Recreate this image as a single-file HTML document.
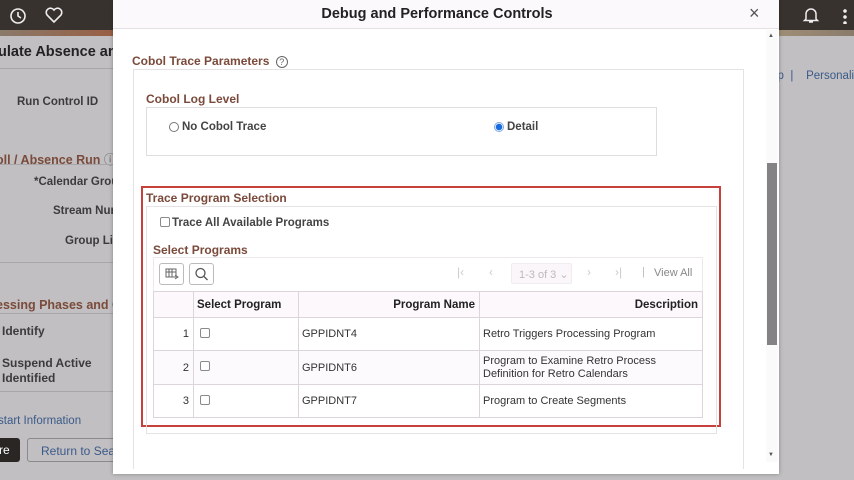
<!DOCTYPE html>
<html><head><style>
*{box-sizing:border-box;margin:0;padding:0}
body{width:854px;height:480px;overflow:hidden;position:relative;background:#c1bfc1;font-family:"Liberation Sans",sans-serif;}
.abs{position:absolute}
.top{left:0;top:0;width:854px;height:30px;background:#38322f}
.band{left:0;top:30px;width:854px;height:6px;background:linear-gradient(90deg,#8a7a6a,#a05030 20%,#c89040 40%,#8a9aa0 60%,#b8a888 80%,#8a7a6a)}
.lbl{font-size:12px;font-weight:bold;color:#3c3a3c;white-space:nowrap}
.brn{color:#7a4a3a;font-weight:bold;white-space:nowrap}
.modal{left:113px;top:0;width:666px;height:474px;background:#fff;box-shadow:0 0 4px rgba(0,0,0,.3)}
.hdr{left:0;top:0;width:666px;height:29px;background:#fcf9fc;border-bottom:1px solid #e4e0e4}
table{border-collapse:collapse;font-size:11px;color:#333}
td,th{border:1px solid #dcd6dc;}
th{height:25px;background:#fcf8fc;font-size:11.5px;color:#222}
.cb{display:inline-block;width:10px;height:10px;border:1px solid #8a8a8a;border-radius:2px;background:#fff}
</style></head><body>
<div class="abs top"></div>
<div class="abs band"></div>
<svg class="abs" style="left:8px;top:6px" width="20" height="20" viewBox="0 0 20 20"><circle cx="10" cy="10" r="7" fill="none" stroke="#eee" stroke-width="1.6"/><path d="M10 6v4l3 2" fill="none" stroke="#eee" stroke-width="1.6"/></svg>
<svg class="abs" style="left:44px;top:6px" width="20" height="18" viewBox="0 0 20 18"><path d="M10 16L3 9a4 4 0 0 1 7-5 4 4 0 0 1 7 5z" fill="none" stroke="#eee" stroke-width="1.6"/></svg>
<svg class="abs" style="left:802px;top:5px" width="18" height="20" viewBox="0 0 18 20"><path d="M4 14V9a5 5 0 0 1 10 0v5l1.5 1.5h-13z M7 17h4" fill="none" stroke="#eee" stroke-width="1.5"/></svg>
<div class="abs" style="left:843px;top:8px;width:4px;height:16px;background:radial-gradient(circle,#eee 1.6px,transparent 2px) 0 0/4px 6px"></div>
<div class="abs" style="left:-2px;top:44px;font-size:14.5px;font-weight:bold;color:#222;white-space:nowrap">ulate Absence an</div>
<div class="abs" style="left:0;top:68px;width:113px;height:1px;background:#a8a6a8"></div>
<div class="abs lbl" style="left:17px;top:96px;font-size:11.5px">Run Control ID</div>
<div class="abs brn" style="left:-4px;top:149px;font-size:12.5px">oll / Absence Run <span style="font-weight:normal;color:#666">ⓘ</span></div>
<div class="abs" style="left:0;top:164px;width:113px;height:1px;background:#a8a6a8"></div>
<div class="abs lbl" style="left:34px;top:176px;font-size:11.5px">*Calendar Grou</div>
<div class="abs lbl" style="left:53px;top:205px;font-size:11.5px">Stream Num</div>
<div class="abs lbl" style="left:65px;top:235px;font-size:11.5px">Group Lis</div>
<div class="abs" style="left:0;top:262px;width:113px;height:1px;background:#a8a6a8"></div>
<div class="abs brn" style="left:-4px;top:298px;font-size:12.5px">essing Phases and C</div>
<div class="abs" style="left:0;top:313px;width:113px;height:1px;background:#a8a6a8"></div>
<div class="abs lbl" style="left:2px;top:324px">Identify</div>
<div class="abs lbl" style="left:2px;top:356px;line-height:15px">Suspend Active<br>Identified</div>
<div class="abs" style="left:0;top:391px;width:113px;height:1px;background:#a8a6a8"></div>
<div class="abs" style="left:-2px;top:415px;font-size:11.5px;color:#3a5a8a;white-space:nowrap">start Information</div>
<div class="abs" style="left:-5px;top:438px;width:25px;height:24px;background:#2a2624;border-radius:3px;color:#fff;font-size:12px;padding:5px 0 0 4px">re</div>
<div class="abs" style="left:27px;top:438px;width:100px;height:24px;border:1px solid #8a8a8a;border-radius:3px;color:#3a5a8a;font-size:12px;padding:5px 0 0 13px;white-space:nowrap;overflow:hidden">Return to Search</div>
<div class="abs" style="left:775px;top:70px;font-size:11.5px;color:#3a5a8a;white-space:nowrap">lp &nbsp;| &nbsp;&nbsp; Personaliz</div>

<div class="abs modal">
 <div class="abs hdr"><div class="abs" style="left:0;width:648px;top:6px;text-align:center;font-size:14.5px;font-weight:bold;color:#222">Debug and Performance Controls</div>
 <div class="abs" style="left:636px;top:3px;font-size:18px;color:#555">×</div></div>
 <div class="abs brn" style="left:19px;top:54px;font-size:12px">Cobol Trace Parameters <span style="display:inline-block;width:12px;height:12px;border:1px solid #666;border-radius:50%;font-size:9px;text-align:center;line-height:11px;color:#666;font-weight:normal;margin-left:3px">?</span></div>
 <div class="abs" style="left:20px;top:69px;width:611px;height:400px;border:1px solid #e4e2e4;border-bottom:none"></div>
 <div class="abs brn" style="left:33px;top:92px;font-size:12px">Cobol Log Level</div>
 <div class="abs" style="left:33px;top:107px;width:511px;height:49px;border:1px solid #e0dde0"></div>
 <div class="abs" style="left:56px;top:122px;width:10px;height:10px;border:1px solid #777;border-radius:50%"></div>
 <div class="abs lbl" style="left:69px;top:121px;font-size:11.5px;color:#444">No Cobol Trace</div>
 <div class="abs" style="left:381px;top:122px;width:10px;height:10px;border:1px solid #7aa8e8;border-radius:50%;background:radial-gradient(circle,#1a6ae0 3px,#fff 3.5px)"></div>
 <div class="abs lbl" style="left:394px;top:121px;font-size:11.5px;color:#444">Detail</div>

 <div class="abs" style="left:28px;top:186px;width:580px;height:241px;border:2px solid #c8403c"></div>
 <div class="abs brn" style="left:33px;top:191px;font-size:12px">Trace Program Selection</div>
 <div class="abs" style="left:33px;top:206px;width:571px;height:228px;border:1px solid #e4e2e4"></div>
 <div class="abs cb" style="left:47px;top:217px"></div>
 <div class="abs lbl" style="left:59px;top:217px;font-size:11.5px;color:#444">Trace All Available Programs</div>
 <div class="abs brn" style="left:40px;top:243px;font-size:12px">Select Programs</div>
 <div class="abs" style="left:40px;top:257px;width:550px;height:35px;border:1px solid #ece8ec;border-bottom:none"></div>
 <div class="abs" style="left:46px;top:263px;width:25px;height:22px;border:1px solid #bbb;border-radius:3px;background:#fff"><svg width="23" height="20" viewBox="0 0 23 20"><rect x="6" y="5" width="10" height="8" fill="none" stroke="#666"/><path d="M6 8h10M9 5v8M12 5v8M15 11l3 2-3 2" stroke="#666" fill="none"/></svg></div>
 <div class="abs" style="left:76px;top:263px;width:25px;height:22px;border:1px solid #bbb;border-radius:3px;background:#fff"><svg width="23" height="20" viewBox="0 0 23 20"><circle cx="10.5" cy="9" r="4.5" fill="none" stroke="#555" stroke-width="1.3"/><path d="M14 12.5l3.5 3.5" stroke="#555" stroke-width="1.3"/></svg></div>
 <div class="abs" style="left:344px;top:265px;font-size:12px;color:#ccc">|‹</div>
 <div class="abs" style="left:376px;top:265px;font-size:12px;color:#ccc">‹</div>
 <div class="abs" style="left:398px;top:263px;width:61px;height:21px;background:#faf6fa;border:1px solid #f0ecf0;border-radius:2px;font-size:11px;color:#bbb;padding:4px 0 0 7px">1-3 of 3 ⌄</div>
 <div class="abs" style="left:474px;top:265px;font-size:12px;color:#ccc">›</div>
 <div class="abs" style="left:502px;top:265px;font-size:12px;color:#ccc">›|</div>
 <div class="abs" style="left:529px;top:266px;font-size:11px;color:#bbb">|</div>
 <div class="abs" style="left:541px;top:267px;font-size:11px;color:#888">View All</div>
 <table class="abs" style="left:40px;top:291px;width:550px">
  <tr><th style="width:40px;height:26px"></th><th style="width:105px;text-align:left;padding-left:3px">Select Program</th><th style="width:181px;text-align:right;padding-right:4px">Program Name</th><th style="text-align:right;padding-right:4px">Description</th></tr>
  <tr style="height:33px"><td style="text-align:right;padding-right:4px">1</td><td style="padding-left:6px"><span class="cb"></span></td><td style="padding-left:3px">GPPIDNT4</td><td style="padding-left:3px">Retro Triggers Processing Program</td></tr>
  <tr style="height:34px;background:#fdfafd"><td style="text-align:right;padding-right:4px">2</td><td style="padding-left:6px"><span class="cb"></span></td><td style="padding-left:3px">GPPIDNT6</td><td style="padding-left:3px;line-height:13px">Program to Examine Retro Process<br>Definition for Retro Calendars</td></tr>
  <tr style="height:33px"><td style="text-align:right;padding-right:4px">3</td><td style="padding-left:6px"><span class="cb"></span></td><td style="padding-left:3px">GPPIDNT7</td><td style="padding-left:3px">Program to Create Segments</td></tr>
 </table>
 <div class="abs" style="left:653px;top:30px;width:12px;height:432px;background:#fafafa"></div>
 <div class="abs" style="left:655px;top:33px;font-size:6px;color:#555">▲</div>
 <div class="abs" style="left:655px;top:452px;font-size:6px;color:#555">▼</div>
 <div class="abs" style="left:654px;top:163px;width:10px;height:182px;background:#858285"></div>
</div>
</body></html>
